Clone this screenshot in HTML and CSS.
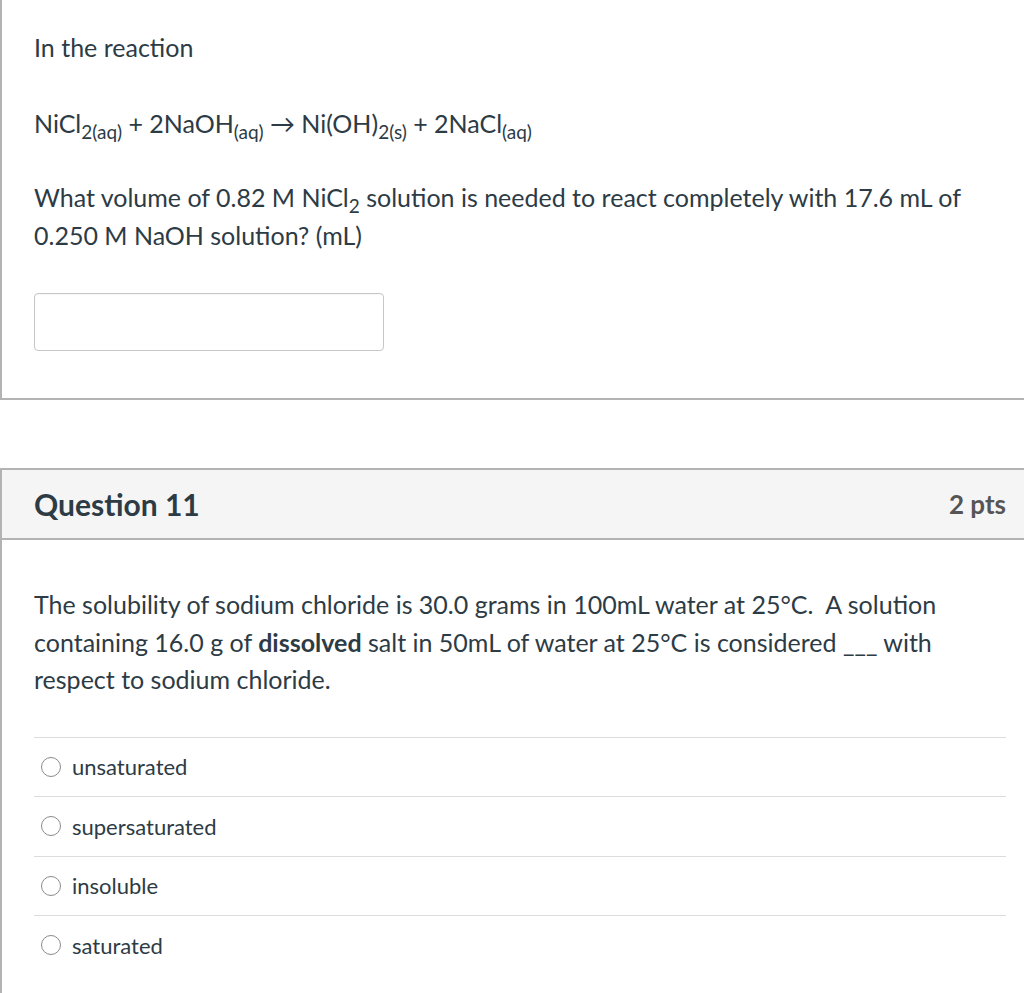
FILE: index.html
```html
<!DOCTYPE html>
<html lang="en">
<head>
<meta charset="utf-8">
<title>Quiz</title>
<link rel="stylesheet" href="styles.css">
</head>
<body>
<div class="page">
  <section class="card card-prev">
    <div class="card-body">
      <p class="text">In the reaction</p>
      <p class="text eq">NiCl<sub>2(aq)</sub> + 2NaOH<sub>(aq)</sub> → Ni(OH)<sub>2(s)</sub> + 2NaCl<sub>(aq)</sub></p>
      <p class="text q-text">What volume of 0.82 M NiCl<sub class="num">2</sub> solution is needed to react completely with 17.6 mL of 0.250 M NaOH solution? (mL)</p>
      <input class="answer-input" type="text" aria-label="answer">
    </div>
  </section>

  <section class="card">
    <header class="card-header">
      <h2 class="q-title">Question 11</h2>
      <span class="q-pts">2 pts</span>
    </header>
    <div class="card-body body-q">
      <p class="text">The solubility of sodium chloride is 30.0 grams in 100mL water at 25°C.&nbsp; A solution containing 16.0 g of <strong>dissolved</strong> salt in 50mL of water at 25°C is considered ___ with respect to sodium chloride.</p>
      <div class="answers">
        <label class="answer"><span class="radio"></span><span>unsaturated</span></label>
        <label class="answer"><span class="radio"></span><span>supersaturated</span></label>
        <label class="answer"><span class="radio"></span><span>insoluble</span></label>
        <label class="answer"><span class="radio"></span><span>saturated</span></label>
      </div>
    </div>
  </section>
</div>
</body>
</html>
```

FILE: styles.css
```css
html, body {
  margin: 0;
  padding: 0;
  background: #ffffff;
  overflow: hidden;
}

body {
  font-family: Lato, "Noto Sans", sans-serif;
  color: #2d3b45;
}

.page {
  width: 1024px;
}

.card {
  border: 2px solid #b3b3b3;
  border-right: none;
  background: #fff;
}

.card-prev {
  border-top: none;
  margin-bottom: 68px;
}

.card-body {
  padding: 29px 18px 47px 32px;
}

.body-q {
  padding-top: 46px;
  padding-bottom: 0;
  height: 408px;
}

.text {
  margin: 0 0 38px;
  font-size: 25px;
  line-height: 37.5px;
}

.eq {
  margin-bottom: 37px;
}

.q-text {
  margin-bottom: 39px;
}

sub {
  font-size: 19px;
  line-height: 0;
  vertical-align: -6px;
}

.answer-input {
  display: block;
  margin: 0;
  width: 350px;
  height: 58px;
  box-sizing: border-box;
  border: 1px solid #c7c7c7;
  border-radius: 4px;
  background: #fff;
  box-shadow: inset 0 1px 1px rgba(0,0,0,0.04);
}

.card-header {
  display: flex;
  align-items: center;
  justify-content: space-between;
  height: 68px;
  padding: 0 18px 0 32px;
  background: #f5f5f5;
  border-bottom: 2px solid #b3b3b3;
}

.q-title {
  margin: 0;
  font-size: 30px;
  font-weight: 700;
  color: #2d3b45;
}

.q-pts {
  font-size: 26px;
  font-weight: 700;
  color: #555;
}

.answers {
  border-top: 1px solid #dcdcdc;
}

.answer {
  display: flex;
  align-items: center;
  gap: 11px;
  height: 58.5px;
  padding-left: 7px;
  border-bottom: 1px solid #dcdcdc;
  font-size: 22px;
  color: #2d3b45;
}

.answer:last-child {
  border-bottom: none;
}

.radio {
  width: 20px;
  height: 20px;
  box-sizing: border-box;
  border: 1.5px solid #8a8a8a;
  border-radius: 50%;
  flex: none;
}
```
